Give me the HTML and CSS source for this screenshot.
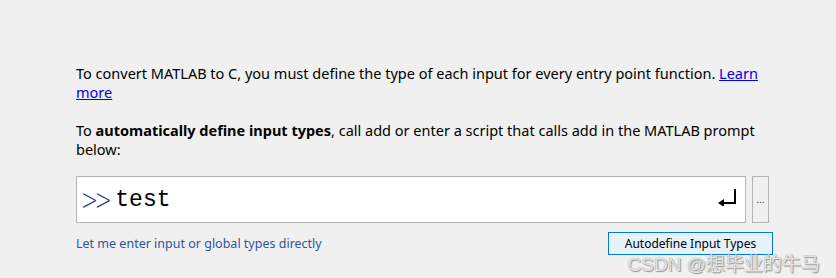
FILE: index.html
```html
<!DOCTYPE html>
<html lang="en">
<head>
    <meta charset="UTF-8">
    <title>Define Input Types</title>
    <link rel="stylesheet" href="styles.css">
</head>
<body>
    <div class="panel">
        <p class="intro">To convert MATLAB to C, you must define the type of each input for every entry point function. <a href="#">Learn more</a></p>
        <p class="intro">To <b>automatically define input types</b>, call add or enter a script that calls add in the MATLAB prompt below:</p>

        <div class="prompt-row">
            <div class="prompt">
                <span class="chevrons">&gt;&gt;</span>
                <span class="command">test</span>
                <svg class="enter" width="20" height="18" viewBox="0 0 20 18">
                    <path d="M18 1 V15 H5" fill="none" stroke="#000" stroke-width="2"/>
                    <path d="M1 15 L7 11 L7 19 Z" fill="#000"/>
                </svg>
            </div>
            <button type="button" class="more-btn">...</button>
        </div>

        <div class="actions">
            <a href="#" class="manual">Let me enter input or global types directly</a>
            <button type="button" class="auto-btn">Autodefine Input Types</button>
        </div>
    </div>
    <div class="watermark">CSDN @想毕业的牛马</div>
</body>
</html>
```

FILE: styles.css
```css
body {
    margin: 0;
    background-color: #f0f0f0;
    font-family: "Noto Sans", "Open Sans", sans-serif;
    color: #000;
    height: 278px;
    overflow: hidden;
    position: relative;
}

.panel {
    width: 692px;
    padding: 64px 0 0 76px;
}

.intro {
    margin: 0 0 19px;
    font-size: 14.5px;
    line-height: 19px;
}

.intro a {
    color: #0000ee;
}

.prompt-row {
    display: flex;
    gap: 6px;
    margin-top: -2px;
    width: 693px;
}

.prompt {
    flex: 1;
    height: 45px;
    background: #fff;
    border: 1px solid #b4b4b4;
    display: flex;
    align-items: center;
    padding: 0 8px 0 4px;
}

.chevrons {
    display: inline-block;
    font-family: "DejaVu Sans", sans-serif;
    font-weight: 200;
    font-size: 30px;
    line-height: 30px;
    color: #2b3f8f;
    letter-spacing: -5px;
    margin-right: -6px;
    transform: scaleX(0.68);
    transform-origin: left center;
}

.command {
    font-family: "Liberation Mono", monospace;
    font-size: 23px;
    flex: 1;
}

.enter {
    margin-top: -6px;
}

.more-btn {
    width: 17px;
    height: 47px;
    padding: 0;
    background: #f0f0f0;
    border: 1px solid #b4b4b4;
    font-size: 10px;
    color: #333;
}

.actions {
    display: flex;
    justify-content: space-between;
    align-items: center;
    margin-top: 9px;
    width: 697px;
}

.manual {
    font-size: 12.5px;
    color: #2b5797;
    text-decoration: none;
}

.auto-btn {
    width: 165px;
    height: 23px;
    padding: 0;
    background: #e5f1fb;
    border: 1px solid #0078d7;
    font-family: "Noto Sans", sans-serif;
    font-size: 12px;
    color: #000;
}

.watermark {
    position: absolute;
    right: 16px;
    bottom: 2px;
    font-family: "Liberation Sans", "Noto Sans CJK SC", sans-serif;
    font-size: 19px;
    color: rgba(255, 255, 255, 0.75);
    text-shadow: 0 0 1px #888, 1px 1px 1px #999;
}
```
